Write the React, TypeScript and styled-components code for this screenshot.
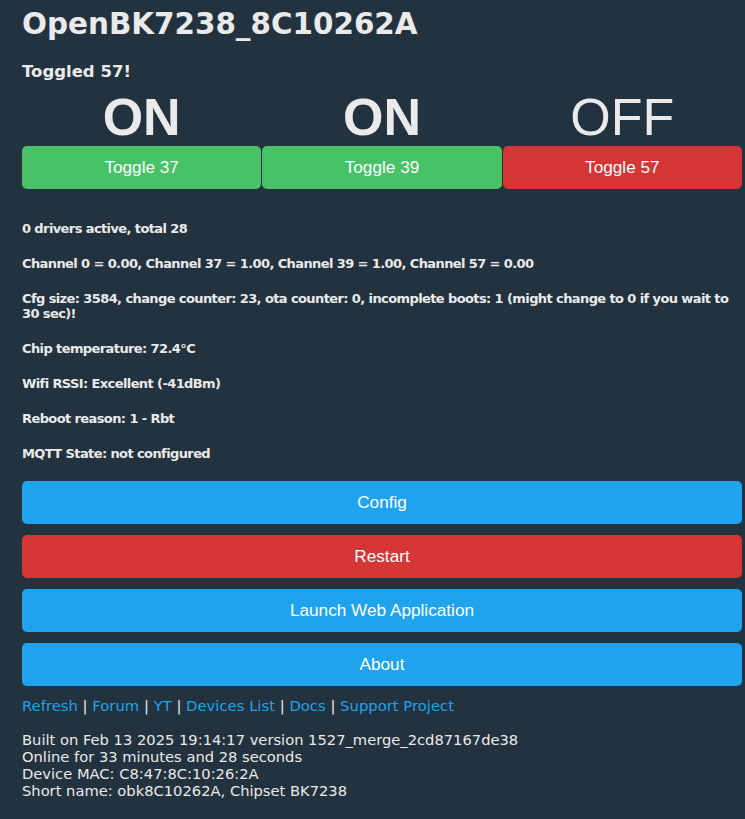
import styled, { createGlobalStyle } from 'styled-components'

const GlobalStyle = createGlobalStyle`
    html, body {
        margin: 0;
        padding: 0;
        background: #22323f;
    }
    body {
        font-family: "DejaVu Sans", Verdana, sans-serif;
        color: #eaeaea;
    }
`

type Pin = {
    channel: number,
    on: boolean,
}

const pins: Pin[] = [
    { channel: 37, on: true },
    { channel: 39, on: true },
    { channel: 57, on: false },
]

const infoLines = [
    '0 drivers active, total 28',
    'Channel 0 = 0.00, Channel 37 = 1.00, Channel 39 = 1.00, Channel 57 = 0.00',
    'Cfg size: 3584, change counter: 23, ota counter: 0, incomplete boots: 1 (might change to 0 if you wait to 30 sec)!',
    'Chip temperature: 72.4°C',
    'Wifi RSSI: Excellent (-41dBm)',
    'Reboot reason: 1 - Rbt',
    'MQTT State: not configured',
]

const links = ['Refresh', 'Forum', 'YT', 'Devices List', 'Docs', 'Support Project']

const App = () => {
    return (
        <>
            <GlobalStyle />
            <Page>
                <Title>OpenBK7238_8C10262A</Title>
                <Status>Toggled 57!</Status>
                <PinGrid>
                    {pins.map(pin => (
                        <PinCell key={pin.channel}>
                            <PinState $on={pin.on}>{pin.on ? 'ON' : 'OFF'}</PinState>
                            <Button $variant={pin.on ? 'green' : 'red'}>
                                Toggle {pin.channel}
                            </Button>
                        </PinCell>
                    ))}
                </PinGrid>
                <InfoList>
                    {infoLines.map(line => (
                        <InfoLine key={line}>{line}</InfoLine>
                    ))}
                </InfoList>
                <ButtonStack>
                    <Button $variant="blue">Config</Button>
                    <Button $variant="red">Restart</Button>
                    <Button $variant="blue">Launch Web Application</Button>
                    <Button $variant="blue">About</Button>
                </ButtonStack>
                <Links>
                    {links.map((link, i) => (
                        <span key={link}>
                            {i > 0 ? ' | ' : null}
                            <Link href="#">{link}</Link>
                        </span>
                    ))}
                </Links>
                <Footer>
                    <div>Built on Feb 13 2025 19:14:17 version 1527_merge_2cd87167de38</div>
                    <div>Online for 33 minutes and 28 seconds</div>
                    <div>Device MAC: C8:47:8C:10:26:2A</div>
                    <div>Short name: obk8C10262A, Chipset BK7238</div>
                </Footer>
            </Page>
        </>
    )
}

export default App

const colors = {
    blue: '#1fa3ec',
    green: '#47c266',
    red: '#d43535',
}

const Page = styled.div`
    width: 720px;
    padding: 7px 3px 20px 22px;
    text-align: left;
`

const Title = styled.h1`
    margin: 0;
    font-size: 29.4px;
    font-weight: bold;
    line-height: 35px;
`

const Status = styled.div`
    margin-top: 20px;
    font-size: 16.5px;
    font-weight: bold;
    line-height: 19px;
`

const PinGrid = styled.div`
    display: grid;
    grid-template-columns: repeat(3, 1fr);
    column-gap: 1px;
    margin-top: 7px;
`

const PinCell = styled.div`
    display: flex;
    flex-direction: column;
`

const PinState = styled.div<{ $on: boolean }>`
    font-family: "Liberation Sans", Arial, sans-serif;
    font-size: 52px;
    line-height: 58px;
    font-weight: ${p => (p.$on ? 'bold' : 'normal')};
    text-align: center;
`

const Button = styled.button<{ $variant: 'blue' | 'green' | 'red' }>`
    display: block;
    width: 100%;
    height: 43px;
    border: 0;
    border-radius: 5px;
    padding: 0;
    background: ${p => colors[p.$variant]};
    color: #fff;
    font-family: "Liberation Sans", Arial, sans-serif;
    font-size: 17.2px;
    cursor: pointer;
`

const InfoList = styled.div`
    margin-top: 32px;
    display: flex;
    flex-direction: column;
    gap: 20px;
`

const InfoLine = styled.div`
    font-size: 13px;
    font-weight: bold;
    line-height: 15px;
    letter-spacing: -0.6px;
`

const ButtonStack = styled.div`
    margin-top: 20px;
    display: flex;
    flex-direction: column;
    gap: 11px;
`

const Links = styled.div`
    margin-top: 11px;
    font-size: 14.8px;
    line-height: 17px;
    color: #eaeaea;
`

const Link = styled.a`
    color: ${colors.blue};
    text-decoration: none;
`

const Footer = styled.div`
    margin-top: 17px;
    font-size: 14.7px;
    line-height: 17px;
`
